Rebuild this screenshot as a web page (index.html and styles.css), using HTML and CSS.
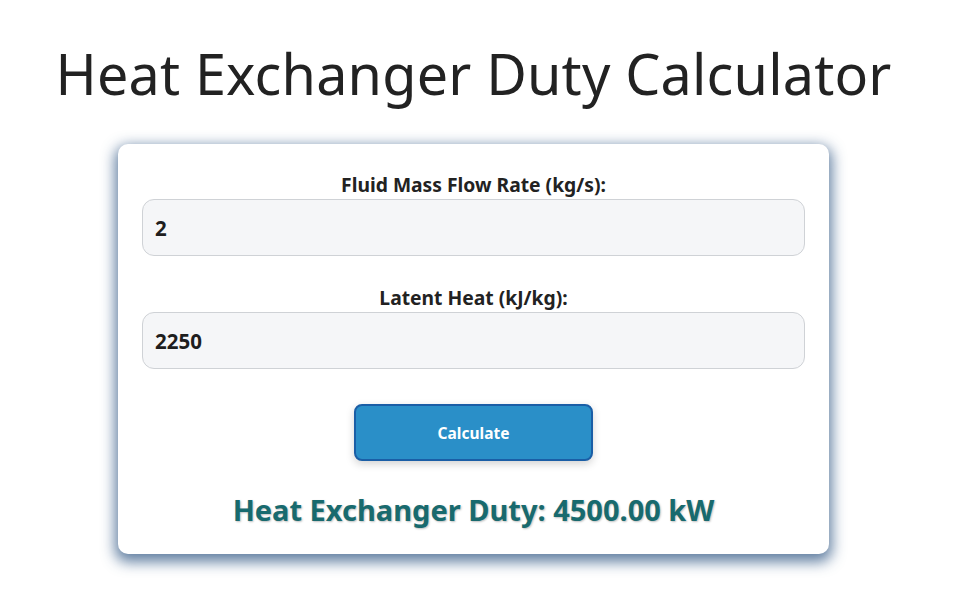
FILE: index.html
```html
<!DOCTYPE html>
<html>
<head>
<meta charset="utf-8">
<title>Heat Exchanger Duty Calculator</title>
<link rel="stylesheet" href="styles.css">
</head>
<body>
<div class="page">
  <h1 class="title">Heat Exchanger Duty Calculator</h1>
  <div class="card">
    <div class="field">
      <label class="label" for="flow">Fluid Mass Flow Rate (kg/s):</label>
      <input class="input" id="flow" type="text" value="2">
    </div>
    <div class="field">
      <label class="label" for="heat">Latent Heat (kJ/kg):</label>
      <input class="input" id="heat" type="text" value="2250">
    </div>
    <div class="actions">
      <button class="btn" type="button">Calculate</button>
    </div>
    <div class="result">Heat Exchanger Duty: 4500.00 kW</div>
  </div>
</div>
</body>
</html>
```
FILE: styles.css
```css
html, body {
  margin: 0;
  padding: 0;
  background: #ffffff;
}
body {
  font-family: "Noto Sans", "Open Sans", "Liberation Sans", sans-serif;
  color: #222;
  min-height: 603px;
}
.page {
  width: 947px;
  padding-bottom: 40px;
  display: flex;
  flex-direction: column;
  align-items: center;
}
.title {
  margin: 34px 0 0 0;
  font-size: 55.7px;
  line-height: 78px;
  font-weight: 400;
  color: #222;
  letter-spacing: 0.2px;
}
.card {
  margin-top: 32px;
  width: 711px;
  box-sizing: border-box;
  padding: 30px 24px 28px;
  background: #fff;
  border-radius: 10px;
  box-shadow: 0 5px 14px 3px rgba(72, 106, 146, 0.85);
  display: flex;
  flex-direction: column;
}
.field {
  display: flex;
  flex-direction: column;
  margin-bottom: 31px;
}
.label {
  text-align: center;
  font-size: 19.3px;
  font-weight: 700;
  line-height: 22px;
  color: #222;
  margin-bottom: 3px;
}
.input {
  height: 57px;
  box-sizing: border-box;
  border: 1px solid #cfd2d6;
  border-radius: 12px;
  background: #f5f6f8;
  padding: 0 12px;
  font-family: inherit;
  font-size: 20.5px;
  font-weight: 700;
  color: #1e1e1e;
  outline: none;
}
.actions {
  display: flex;
  justify-content: center;
  margin-top: 4px;
}
.btn {
  width: 239px;
  height: 57px;
  box-sizing: border-box;
  background: #2a8fc8;
  border: 2px solid #1a5ea6;
  border-radius: 8px;
  color: #fff;
  font-family: inherit;
  font-size: 15.5px;
  font-weight: 700;
  box-shadow: 0 3px 8px rgba(0, 0, 0, 0.18);
}
.result {
  margin-top: 33px;
  text-align: center;
  font-size: 29px;
  line-height: 32px;
  font-weight: 700;
  color: #186a6e;
  text-shadow: 1px 1px 2px rgba(0, 0, 0, 0.25);
}
```
